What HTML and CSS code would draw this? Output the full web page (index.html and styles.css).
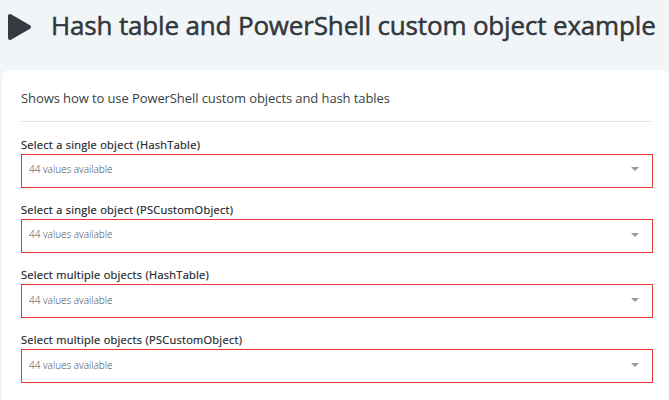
FILE: index.html
```
<!DOCTYPE html>
<html lang="en">

<head>
    <meta charset="UTF-8">
    <meta name="viewport" content="width=device-width, initial-scale=1.0">
    <title>Hash table and PowerShell custom object example</title>
    <link rel="stylesheet" href="styles.css">
</head>

<body>
    <header class="page-header">
        <svg class="play-icon" width="24" height="28" viewBox="0 0 24 28">
            <path d="M2 3v22L21 14z" fill="#353a42" stroke="#353a42" stroke-width="4" stroke-linejoin="round" />
        </svg>
        <h1>Hash table and PowerShell custom object example</h1>
    </header>
    <main class="card">
        <p class="description">Shows how to use PowerShell custom objects and hash tables</p>
        <div class="field">
            <label>Select a single object (HashTable)</label>
            <div class="select single"><span>44 values available</span><i class="caret"></i></div>
        </div>
        <div class="field">
            <label>Select a single object (PSCustomObject)</label>
            <div class="select single"><span>44 values available</span><i class="caret low"></i></div>
        </div>
        <div class="field">
            <label>Select multiple objects (HashTable)</label>
            <div class="select"><span>44 values available</span><i class="caret"></i></div>
        </div>
        <div class="field">
            <label>Select multiple objects (PSCustomObject)</label>
            <div class="select"><span>44 values available</span><i class="caret"></i></div>
        </div>
    </main>
</body>

</html>
```
FILE: styles.css
```
* {
    box-sizing: border-box;
}

body {
    margin: 0;
    height: 400px;
    overflow: hidden;
    background-color: #f1f5f8;
    font-family: 'Open Sans', sans-serif;
    color: #32373c;
}

.page-header {
    display: flex;
    height: 70px;
    padding: 5px 0 0 8px;
}

.play-icon {
    flex: none;
    width: 24px;
    margin-top: 8px;
}

h1 {
    margin: 0 0 0 19px;
    font-size: 26px;
    font-weight: 400;
    letter-spacing: -0.16px;
    line-height: 40px;
    white-space: nowrap;
    -webkit-text-stroke: 0.5px #32373c;
}

.card {
    height: 340px;
    margin-left: 2px;
    padding: 17px 16px 0 19px;
    background-color: #fff;
    border-radius: 8px 8px 0 0;
}

.description {
    margin: 0 2px 14px 0;
    padding-bottom: 12px;
    border-bottom: 1px solid #e1e1e1;
    color: #3a3f45;
    font-size: 13px;
    letter-spacing: -0.09px;
    line-height: 22px;
}

.field {
    height: 65px;
}

.field label {
    display: block;
    height: 18px;
    color: #22262a;
    font-size: 11px;
    letter-spacing: 0.28px;
    line-height: 18px;
    -webkit-text-stroke: 0.2px #22262a;
}

.select {
    display: flex;
    justify-content: space-between;
    height: 34px;
    padding: 8px 13px 0 7px;
    border: 1px solid #e53935;
    color: #44484d;
    font-size: 10px;
    font-weight: 300;
    line-height: 15px;
}

.select.single {
    padding-top: 7px;
}

.caret {
    height: 4px;
    margin-top: 5px;
    border: 4px solid transparent;
    border-top-color: #999;
    border-bottom: 0;
}

.caret.low {
    margin-top: 6px;
}
```
